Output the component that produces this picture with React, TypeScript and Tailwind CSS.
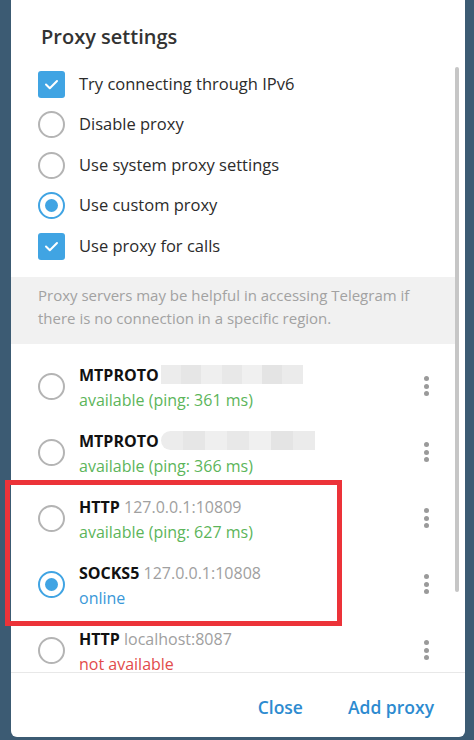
import React from "react";

const font = { fontFamily: '"Open Sans", "Liberation Sans", sans-serif' };

const Checkbox = () => (
    <div className="w-[27px] h-[27px] rounded-[3px] bg-[#40a4e3] flex items-center justify-center shrink-0">
        <svg width="27" height="27" viewBox="0 0 27 27" fill="none">
            <path d="M8 13.5 L11.8 17.3 L19 10" stroke="white" strokeWidth="2" strokeLinecap="round" strokeLinejoin="round" />
        </svg>
    </div>
);

const Radio: React.FC<{ checked?: boolean }> = ({ checked }) => (
    <div
        className={`w-[27px] h-[27px] rounded-full border-[2.5px] flex items-center justify-center shrink-0 ${
            checked ? "border-[#40a4e3]" : "border-[#b4b4b4]"
        }`}
    >
        {checked && <div className="w-[13px] h-[13px] rounded-full bg-[#40a4e3]" />}
    </div>
);

const Dots = () => (
    <div className="flex flex-col gap-[2.5px] items-center">
        <div className="w-[5px] h-[5px] rounded-full bg-[#9a9a9a]" />
        <div className="w-[5px] h-[5px] rounded-full bg-[#9a9a9a]" />
        <div className="w-[5px] h-[5px] rounded-full bg-[#9a9a9a]" />
    </div>
);

// pixelated smear where the address was hidden
const Blur: React.FC<{ w: number; rounded?: boolean }> = ({ w, rounded }) => (
    <span
        className={`inline-flex h-[19px] align-[-3px] ml-[2px] overflow-hidden ${rounded ? "rounded-l-full" : ""}`}
        style={{ width: w }}
    >
        <span className="flex-1 bg-[#ececec]" />
        <span className="flex-1 bg-[#e6e6e6]" />
        <span className="flex-1 bg-[#efefef]" />
        <span className="flex-1 bg-[#e8e8e8]" />
        <span className="flex-1 bg-[#f0f0f0]" />
        <span className="flex-1 bg-[#e4e4e4]" />
        <span className="flex-1 bg-[#ebebeb]" />
    </span>
);

type Proxy = {
    type: string;
    addr?: string;
    blur?: number;
    rounded?: boolean;
    status: string;
    tone: "green" | "blue" | "red";
    checked?: boolean;
};

const proxies: Proxy[] = [
    { type: "MTPROTO", blur: 142, status: "available (ping: 361 ms)", tone: "green" },
    { type: "MTPROTO", blur: 154, rounded: true, status: "available (ping: 366 ms)", tone: "green" },
    { type: "HTTP", addr: "127.0.0.1:10809", status: "available (ping: 627 ms)", tone: "green" },
    { type: "SOCKS5", addr: "127.0.0.1:10808", status: "online", tone: "blue", checked: true },
    { type: "HTTP", addr: "localhost:8087", status: "not available", tone: "red" },
];

const toneClass = {
    green: "text-[#5cb55a]",
    blue: "text-[#3a98d8]",
    red: "text-[#e24b4b]",
};

export default function App() {
    return (
        <div className="relative w-[474px] h-[740px] bg-[#3c5b73] overflow-hidden" style={font}>
            <div className="ml-[11px] w-[454px] h-[737px] bg-white rounded-b-[6px] flex flex-col overflow-hidden">
                <div className="h-[64px] shrink-0 pl-[30px] pt-[23px]">
                    <h1 className="text-[20px] leading-[28px] font-semibold text-[#333]">Proxy settings</h1>
                </div>

                <div className="relative flex-1 overflow-hidden">
                    <div className="flex flex-col">
                        {[
                            { kind: "check", label: "Try connecting through IPv6" },
                            { kind: "radio", label: "Disable proxy" },
                            { kind: "radio", label: "Use system proxy settings" },
                            { kind: "radio-on", label: "Use custom proxy" },
                            { kind: "check", label: "Use proxy for calls" },
                        ].map((o) => (
                            <div key={o.label} className="h-[40.5px] flex items-center pl-[27px] gap-[14px]">
                                {o.kind === "check" ? <Checkbox /> : <Radio checked={o.kind === "radio-on"} />}
                                <span className="text-[16.5px] text-[#2b2b2b]">{o.label}</span>
                            </div>
                        ))}
                    </div>

                    <div className="mt-[10.5px] mr-[10px] h-[67px] bg-[#f1f1f1] pl-[27px] pt-[7px] text-[15px] leading-[23px] text-[#a2a2a2]">
                        Proxy servers may be helpful in accessing Telegram if
                        <br />
                        there is no connection in a specific region.
                    </div>

                    <div className="mt-[9px] flex flex-col">
                        {proxies.map((p, i) => (
                            <div key={i} className="h-[66px] shrink-0 flex items-center pl-[27px] pr-[36px]">
                                <Radio checked={p.checked} />
                                <div className="ml-[14px] flex-1 flex flex-col pt-[3px]">
                                    <div className="text-[16px] leading-[25px] whitespace-nowrap">
                                        <span className="font-bold text-[#111]">{p.type}</span>
                                        {p.addr && <span className="text-[#a0a0a0]"> {p.addr}</span>}
                                        {p.blur && <Blur w={p.blur} rounded={p.rounded} />}
                                    </div>
                                    <div className={`text-[16px] leading-[25px] ${toneClass[p.tone]}`}>{p.status}</div>
                                </div>
                                <Dots />
                            </div>
                        ))}
                    </div>

                    <div className="absolute right-[6px] top-[3px] w-[4px] h-[525px] rounded-full bg-[#c6c6c6]" />
                </div>

                <div className="h-[65px] shrink-0 border-t border-[#e8e8e8] flex items-center justify-end pr-[31px] pt-[4px] gap-[45px] text-[17.5px] font-semibold text-[#2d8bd0]">
                    <span>Close</span>
                    <span>Add proxy</span>
                </div>
            </div>

            <div className="absolute left-[5px] top-[480px] w-[337px] h-[146px] border-[5px] border-[#ec3339]" />
        </div>
    );
}
